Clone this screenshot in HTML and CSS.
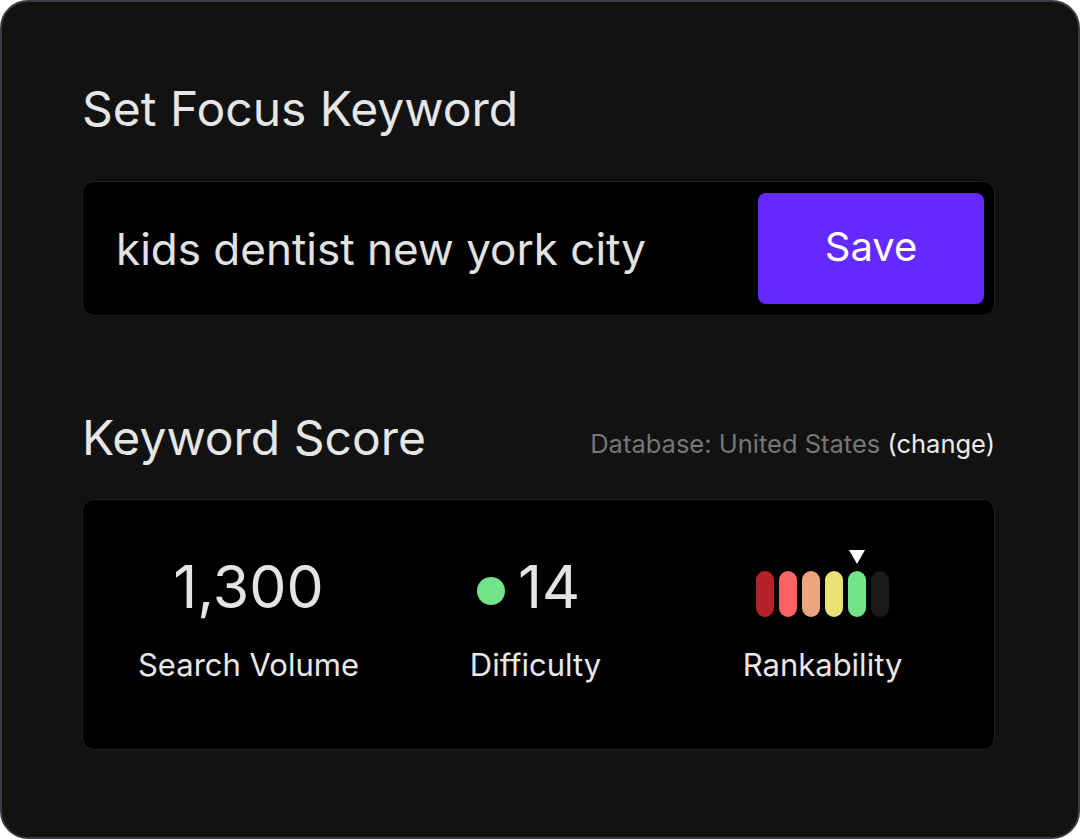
FILE: index.html
```html
<!DOCTYPE html>
<html lang="en">
<head>
    <meta charset="UTF-8">
    <title>Focus Keyword</title>
    <link rel="stylesheet" href="styles.css">
</head>
<body>
    <div class="card">
        <h2 class="title">Set Focus Keyword</h2>
        <div class="keyword_box">
            <div class="keyword_text">kids dentist new york city</div>
            <button class="save_btn">Save</button>
        </div>

        <div class="score_head">
            <h2 class="title">Keyword Score</h2>
            <div class="db">Database: United States <span class="db_change">(change)</span></div>
        </div>
        <div class="score_box">
            <div class="stat">
                <div class="stat_value">1,300</div>
                <div class="stat_label">Search Volume</div>
            </div>
            <div class="stat">
                <div class="stat_value"><span class="dot"></span>14</div>
                <div class="stat_label">Difficulty</div>
            </div>
            <div class="stat">
                <div class="stat_value">
                    <div class="bars">
                        <span class="bar bar_1"></span>
                        <span class="bar bar_2"></span>
                        <span class="bar bar_3"></span>
                        <span class="bar bar_4"></span>
                        <span class="bar bar_5"><span class="marker"></span></span>
                        <span class="bar bar_6"></span>
                    </div>
                </div>
                <div class="stat_label">Rankability</div>
            </div>
        </div>
    </div>
</body>
</html>
```

FILE: styles.css
```css
* {
    box-sizing: border-box;
}
body {
    margin: 0;
    background: #fff;
    font-family: Inter, "Noto Sans", sans-serif;
}
.card {
    width: 1080px;
    height: 839px;
    background: #121212;
    border: 2px solid #3c3c46;
    border-radius: 28px;
    padding: 78px 83px 0 80px;
}
.title {
    margin: 0;
    font-size: 48px;
    line-height: 1.2;
    font-weight: 400;
    color: #e6e6e6;
}
.keyword_box {
    display: flex;
    align-items: center;
    justify-content: space-between;
    margin-top: 43px;
    height: 135px;
    background: #000;
    border: 1px solid #202020;
    border-radius: 12px;
    padding: 0 10px 0 33px;
}
.keyword_text {
    font-size: 44px;
    color: #e2e2e2;
    padding-top: 2px;
}
.save_btn {
    width: 226px;
    height: 111px;
    border: none;
    border-radius: 8px;
    background: #6429ff;
    color: #fff;
    font-family: inherit;
    font-size: 40px;
    padding: 0 0 4px;
}
.score_head {
    display: flex;
    align-items: center;
    justify-content: space-between;
    margin-top: 93px;
}
.db {
    font-size: 25.5px;
    color: #777;
    margin-top: 12px;
}
.db_change {
    color: #ececec;
}
.score_box {
    display: grid;
    grid-template-columns: repeat(3, 1fr);
    margin-top: 33px;
    height: 251px;
    background: #000;
    border: 1px solid #202020;
    border-radius: 12px;
    padding: 53px 28px 0 22px;
}
.stat {
    display: flex;
    flex-direction: column;
    align-items: center;
}
.stat_value {
    display: flex;
    align-items: center;
    height: 67px;
    font-size: 59px;
    color: #e4e4e4;
}
.stat_label {
    margin-top: 26px;
    font-size: 31px;
    line-height: 1.2;
    color: #e8e8e8;
}
.dot {
    width: 28px;
    height: 28px;
    border-radius: 50%;
    background: #72e58a;
    margin: 8px 13px 0 -14px;
}
.bars {
    display: flex;
    gap: 5px;
    margin-top: 14px;
}
.bar {
    position: relative;
    width: 18px;
    height: 46px;
    border-radius: 9px;
}
.bar_1 { background: #b7222a; }
.bar_2 { background: #fc6464; }
.bar_3 { background: #eda57e; }
.bar_4 { background: #ebe275; }
.bar_5 { background: #72e58a; }
.bar_6 { background: #1a1a1a; }
.marker {
    position: absolute;
    left: 1px;
    top: -21px;
    border-left: 8px solid transparent;
    border-right: 8px solid transparent;
    border-top: 14px solid #fff;
}
```
